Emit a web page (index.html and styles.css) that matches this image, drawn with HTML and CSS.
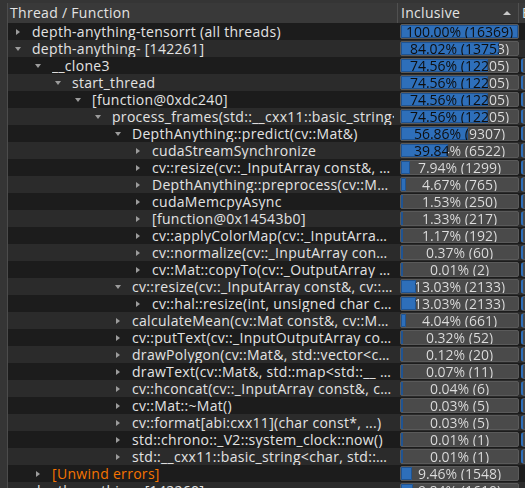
FILE: index.html
```html
<!DOCTYPE html>
<html>
<head>
<meta charset="utf-8">
<link rel="stylesheet" href="styles.css">
</head>
<body>
<div class="view">
  <div class="head">
    <div class="hname">Thread / Function</div>
    <div class="hinc"><span>Inclusive</span><span class="sort"></span></div>
    <div class="hexc">Exclusive</div>
  </div>

  <div class="row"><div class="name l0"><span class="tw c"></span><span class="label">depth-anything-tensorrt (all threads)</span></div><div class="inc"><div class="bar" style="--p:100%"><div class="fill"></div><span class="t">100.00% (16369)</span></div></div><div class="exc"></div></div>
  <div class="row"><div class="name l0"><span class="tw e"></span><span class="label">depth-anything- [142261]</span></div><div class="inc"><div class="bar" style="--p:84.02%"><div class="fill"></div><span class="t">84.02% (13753)</span></div></div><div class="exc"></div></div>
  <div class="row"><div class="name l1"><span class="tw e"></span><span class="label">__clone3</span></div><div class="inc"><div class="bar" style="--p:74.56%"><div class="fill"></div><span class="t">74.56% (12205)</span></div></div><div class="exc"><div class="ebar"></div></div></div>
  <div class="row"><div class="name l2"><span class="tw e"></span><span class="label">start_thread</span></div><div class="inc"><div class="bar" style="--p:74.56%"><div class="fill"></div><span class="t">74.56% (12205)</span></div></div><div class="exc"><div class="ebar"></div></div></div>
  <div class="row"><div class="name l3"><span class="tw e"></span><span class="label">[function@0xdc240]</span></div><div class="inc"><div class="bar" style="--p:74.56%"><div class="fill"></div><span class="t">74.56% (12205)</span></div></div><div class="exc"><div class="ebar"></div></div></div>
  <div class="row"><div class="name l4"><span class="tw e"></span><span class="label clip">process_frames(std::__cxx11::basic_string&lt;char, std::char_traits&lt;char&gt;</span></div><div class="inc"><div class="bar" style="--p:74.56%"><div class="fill"></div><span class="t">74.56% (12205)</span></div></div><div class="exc"><div class="ebar"></div></div></div>
  <div class="row"><div class="name l5"><span class="tw e"></span><span class="label">DepthAnything::predict(cv::Mat&amp;)</span></div><div class="inc"><div class="bar" style="--p:56.86%"><div class="fill"></div><span class="t">56.86% (9307)</span></div></div><div class="exc"><div class="ebar"></div></div></div>
  <div class="row"><div class="name l6"><span class="tw c"></span><span class="label">cudaStreamSynchronize</span></div><div class="inc"><div class="bar" style="--p:39.84%"><div class="fill"></div><span class="t">39.84% (6522)</span></div></div><div class="exc"><div class="ebar"></div></div></div>
  <div class="row"><div class="name l6"><span class="tw c"></span><span class="label">cv::resize(cv::_InputArray const&amp;, cv::_OutputArray const&amp;)</span></div><div class="inc"><div class="bar" style="--p:7.94%"><div class="fill"></div><span class="t">7.94% (1299)</span></div></div><div class="exc"><div class="ebar"></div></div></div>
  <div class="row"><div class="name l6"><span class="tw c"></span><span class="label">DepthAnything::preprocess(cv::Mat const&amp;)</span></div><div class="inc"><div class="bar" style="--p:4.67%"><div class="fill"></div><span class="t">4.67% (765)</span></div></div><div class="exc"><div class="ebar"></div></div></div>
  <div class="row"><div class="name l6"><span class="tw c"></span><span class="label">cudaMemcpyAsync</span></div><div class="inc"><div class="bar" style="--p:1.53%"><div class="fill"></div><span class="t">1.53% (250)</span></div></div><div class="exc"><div class="ebar"></div></div></div>
  <div class="row"><div class="name l6"><span class="tw c"></span><span class="label">[function@0x14543b0]</span></div><div class="inc"><div class="bar" style="--p:1.33%"><div class="fill"></div><span class="t">1.33% (217)</span></div></div><div class="exc"><div class="ebar"></div></div></div>
  <div class="row"><div class="name l6"><span class="tw c"></span><span class="label">cv::applyColorMap(cv::_InputArray const&amp;, cv::_OutputArray const&amp;)</span></div><div class="inc"><div class="bar" style="--p:1.17%"><div class="fill"></div><span class="t">1.17% (192)</span></div></div><div class="exc"><div class="ebar"></div></div></div>
  <div class="row"><div class="name l6"><span class="tw c"></span><span class="label">cv::normalize(cv::_InputArray const&amp;, cv::_InputOutputArray const&amp;)</span></div><div class="inc"><div class="bar" style="--p:0.37%"><div class="fill"></div><span class="t">0.37% (60)</span></div></div><div class="exc"><div class="ebar"></div></div></div>
  <div class="row"><div class="name l6"><span class="tw c"></span><span class="label">cv::Mat::copyTo(cv::_OutputArray const&amp;) const</span></div><div class="inc"><div class="bar" style="--p:0.01%"><div class="fill"></div><span class="t">0.01% (2)</span></div></div><div class="exc"><div class="ebar"></div></div></div>
  <div class="row"><div class="name l5"><span class="tw e"></span><span class="label">cv::resize(cv::_InputArray const&amp;, cv::_OutputArray const&amp;)</span></div><div class="inc"><div class="bar" style="--p:13.03%"><div class="fill"></div><span class="t">13.03% (2133)</span></div></div><div class="exc"><div class="ebar"></div></div></div>
  <div class="row"><div class="name l6"><span class="tw c"></span><span class="label">cv::hal::resize(int, unsigned char const*, unsigned long)</span></div><div class="inc"><div class="bar" style="--p:13.03%"><div class="fill"></div><span class="t">13.03% (2133)</span></div></div><div class="exc"><div class="ebar"></div></div></div>
  <div class="row"><div class="name l5"><span class="tw c"></span><span class="label">calculateMean(cv::Mat const&amp;, cv::Mat const&amp;)</span></div><div class="inc"><div class="bar" style="--p:4.04%"><div class="fill"></div><span class="t">4.04% (661)</span></div></div><div class="exc"><div class="ebar"></div></div></div>
  <div class="row"><div class="name l5"><span class="tw c"></span><span class="label">cv::putText(cv::_InputOutputArray const&amp;, std::__cxx11::basic_string)</span></div><div class="inc"><div class="bar" style="--p:0.32%"><div class="fill"></div><span class="t">0.32% (52)</span></div></div><div class="exc"><div class="ebar"></div></div></div>
  <div class="row"><div class="name l5"><span class="tw c"></span><span class="label">drawPolygon(cv::Mat&amp;, std::vector&lt;cv::Point_&lt;int&gt; &gt; const&amp;)</span></div><div class="inc"><div class="bar" style="--p:0.12%"><div class="fill"></div><span class="t">0.12% (20)</span></div></div><div class="exc"><div class="ebar"></div></div></div>
  <div class="row"><div class="name l5"><span class="tw c"></span><span class="label">drawText(cv::Mat&amp;, std::map&lt;std::__ cxx11::basic_string&gt; const&amp;)</span></div><div class="inc"><div class="bar" style="--p:0.07%"><div class="fill"></div><span class="t">0.07% (11)</span></div></div><div class="exc"><div class="ebar"></div></div></div>
  <div class="row"><div class="name l5"><span class="tw c"></span><span class="label">cv::hconcat(cv::_InputArray const&amp;, cv::_OutputArray const&amp;)</span></div><div class="inc"><div class="bar" style="--p:0.04%"><div class="fill"></div><span class="t">0.04% (6)</span></div></div><div class="exc"><div class="ebar"></div></div></div>
  <div class="row"><div class="name l5"><span class="tw c"></span><span class="label">cv::Mat::~Mat()</span></div><div class="inc"><div class="bar" style="--p:0.03%"><div class="fill"></div><span class="t">0.03% (5)</span></div></div><div class="exc"><div class="ebar"></div></div></div>
  <div class="row"><div class="name l5"><span class="tw c"></span><span class="label">cv::format[abi:cxx11](char const*, ...)</span></div><div class="inc"><div class="bar" style="--p:0.03%"><div class="fill"></div><span class="t">0.03% (5)</span></div></div><div class="exc"><div class="ebar"></div></div></div>
  <div class="row"><div class="name l5"><span class="tw c"></span><span class="label">std::chrono::_V2::system_clock::now()</span></div><div class="inc"><div class="bar" style="--p:0.01%"><div class="fill"></div><span class="t">0.01% (1)</span></div></div><div class="exc"><div class="ebar"></div></div></div>
  <div class="row"><div class="name l5"><span class="tw c"></span><span class="label">std::__cxx11::basic_string&lt;char, std::char_traits&lt;char&gt; &gt;</span></div><div class="inc"><div class="bar" style="--p:0.01%"><div class="fill"></div><span class="t">0.01% (1)</span></div></div><div class="exc"><div class="ebar"></div></div></div>
  <div class="row"><div class="name l1"><span class="tw c"></span><span class="label warn">[Unwind errors]</span></div><div class="inc"><div class="bar" style="--p:9.46%"><div class="fill"></div><span class="t">9.46% (1548)</span></div></div><div class="exc"></div></div>
  <div class="row"><div class="name l0"><span class="tw c"></span><span class="label">depth-anything- [142260]</span></div><div class="inc"><div class="bar" style="--p:9.84%"><div class="fill"></div><span class="t">9.84% (1610)</span></div></div><div class="exc"></div></div>
</div>
</body>
</html>
```

FILE: styles.css
```css
html, body {
  margin: 0;
  padding: 0;
  background: #353535;
  overflow: hidden;
  width: 525px;
  height: 488px;
}

.view {
  margin: 3px 0 0 7px;
  width: 518px;
  overflow: hidden;
  border-left: 1px solid #4c4c4c;
  font-family: "Open Sans", "Noto Sans", sans-serif;
  font-size: 14px;
  color: #e3e3e3;
}

.head {
  display: grid;
  grid-template-columns: 390px 121px 1fr;
  height: 20px;
  background: #393939;
  letter-spacing: 0.3px;
}

.hname, .hinc, .hexc {
  display: flex;
  align-items: center;
  padding-left: 3px;
  line-height: 20px;
  white-space: nowrap;
  overflow: hidden;
  min-width: 0;
}

.hname { border-right: 1px solid #505050; padding-left: 2px; }
.hinc {
  border-right: 1px solid #505050;
  justify-content: space-between;
  padding-right: 7px;
}

.sort {
  width: 0;
  height: 0;
  border-left: 4px solid transparent;
  border-right: 4px solid transparent;
  border-bottom: 4px solid #c8c8c8;
}

.row {
  display: grid;
  grid-template-columns: 391px 121px 1fr;
  height: 17px;
  background: #1c1c1c;
}

.row:nth-of-type(odd) {
  background: #2b2b2b;
}

.name {
  display: flex;
  align-items: center;
  overflow: hidden;
  white-space: nowrap;
  padding-right: 5px;
  min-width: 0;
}

.l0 { padding-left: 0; }
.l1 { padding-left: 20px; }
.l2 { padding-left: 40px; }
.l3 { padding-left: 60px; }
.l4 { padding-left: 80px; }
.l5 { padding-left: 100px; }
.l6 { padding-left: 120px; }

.tw {
  flex: 0 0 20px;
  height: 17px;
  display: flex;
  align-items: center;
  justify-content: center;
}

.tw.c::before {
  content: "";
  width: 0;
  height: 0;
  border-top: 3.5px solid transparent;
  border-bottom: 3.5px solid transparent;
  border-left: 4px solid #9c9c9c;
}

.tw.e::before {
  content: "";
  width: 0;
  height: 0;
  border-left: 3.5px solid transparent;
  border-right: 3.5px solid transparent;
  border-top: 4px solid #9c9c9c;
}

.label {
  margin-left: 4px;
  line-height: 17px;
  letter-spacing: 0.3px;
  overflow: hidden;
  text-overflow: ellipsis;
  min-width: 0;
}

.label.clip { text-overflow: clip; }

.warn { color: #f67400; }

.inc {
  display: flex;
  align-items: center;
  padding-left: 1px;
}

.bar {
  position: relative;
  width: 117px;
  height: 13px;
  background: #4a4a4a;
  border: 1px solid #5a5a5a;
  border-radius: 2px;
}

.fill {
  position: absolute;
  left: 0;
  top: 0;
  bottom: 0;
  width: var(--p);
  min-width: 2px;
  background: #2e6fba;
  box-shadow: inset 0 0 0 1px #1f5391;
  border-radius: 1px;
}

.t {
  position: relative;
  display: block;
  width: 117px;
  text-align: center;
  line-height: 13px;
  font-size: 14px;
  white-space: nowrap;
  color: transparent;
  background: linear-gradient(to right, #0e0e0e var(--p), #dedede var(--p));
  -webkit-background-clip: text;
  background-clip: text;
}

.exc {
  display: flex;
  align-items: center;
  padding-left: 1px;
  overflow: hidden;
  min-width: 0;
}

.ebar {
  flex: 0 0 60px;
  height: 13px;
  background: #4a4a4a;
  border: 1px solid #5a5a5a;
  border-left: 2px solid #2e6fba;
  border-radius: 3px;
}
```
